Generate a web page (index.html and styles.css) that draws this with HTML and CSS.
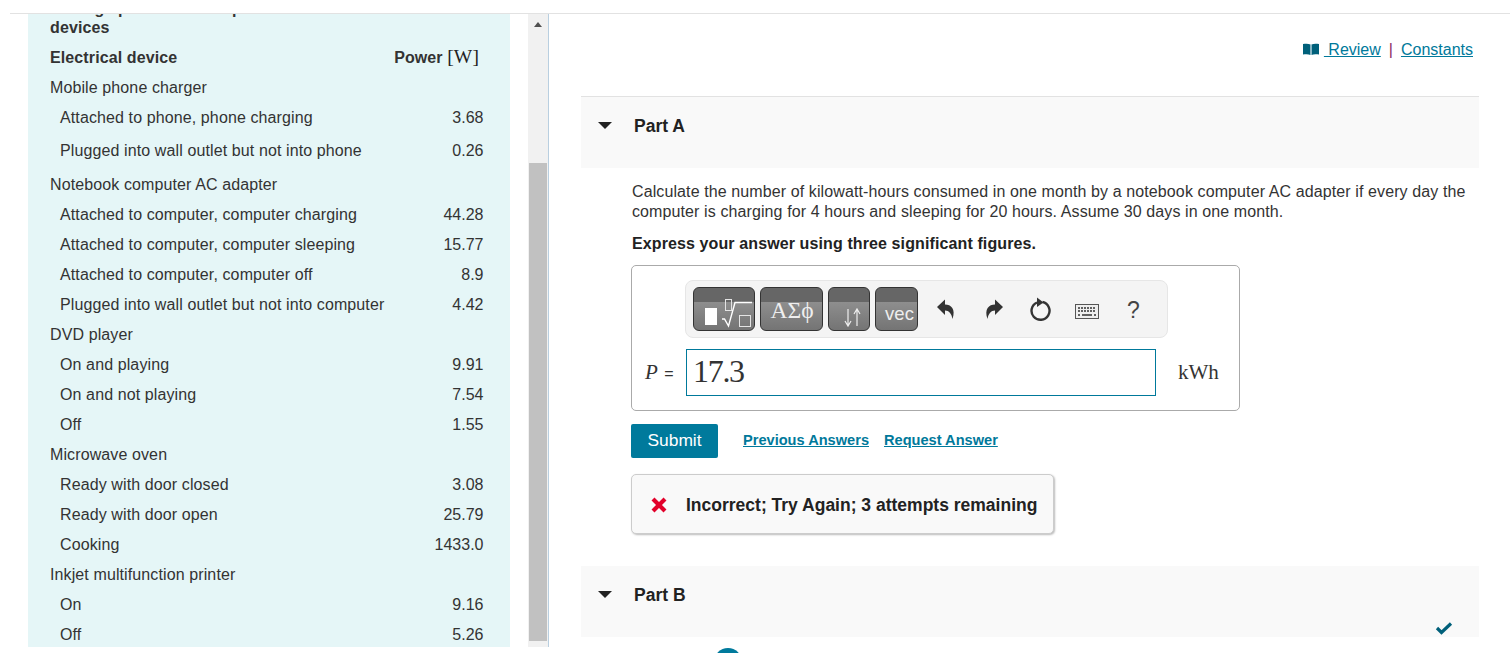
FILE: index.html
```html
<!DOCTYPE html>
<html lang="en">
<head>
<meta charset="utf-8">
<title>Part A</title>
<link rel="stylesheet" href="styles.css">
</head>
<body>
<div class="topbar"></div>
<div class="main">
  <aside class="sidebar">
    <div class="sheet">
      <div class="sheet-title">Average power consumption of electrical<br>devices</div>
      <table class="power">
        <tr class="r-head"><th>Electrical device</th><th class="unit">Power <span class="serif">[W]</span></th></tr>
        <tr><td class="group" colspan="2">Mobile phone charger</td></tr>
        <tr><td class="item">Attached to phone, phone charging</td><td class="num">3.68</td></tr>
        <tr class="r-tall"><td class="item">Plugged into wall outlet but not into phone</td><td class="num">0.26</td></tr>
        <tr class="r-mid"><td class="group" colspan="2">Notebook computer AC adapter</td></tr>
        <tr><td class="item">Attached to computer, computer charging</td><td class="num">44.28</td></tr>
        <tr><td class="item">Attached to computer, computer sleeping</td><td class="num">15.77</td></tr>
        <tr><td class="item">Attached to computer, computer off</td><td class="num">8.9</td></tr>
        <tr><td class="item">Plugged into wall outlet but not into computer</td><td class="num">4.42</td></tr>
        <tr><td class="group" colspan="2">DVD player</td></tr>
        <tr><td class="item">On and playing</td><td class="num">9.91</td></tr>
        <tr><td class="item">On and not playing</td><td class="num">7.54</td></tr>
        <tr><td class="item">Off</td><td class="num">1.55</td></tr>
        <tr><td class="group" colspan="2">Microwave oven</td></tr>
        <tr><td class="item">Ready with door closed</td><td class="num">3.08</td></tr>
        <tr><td class="item">Ready with door open</td><td class="num">25.79</td></tr>
        <tr><td class="item">Cooking</td><td class="num">1433.0</td></tr>
        <tr><td class="group" colspan="2">Inkjet multifunction printer</td></tr>
        <tr><td class="item">On</td><td class="num">9.16</td></tr>
        <tr><td class="item">Off</td><td class="num">5.26</td></tr>
      </table>
    </div>
  </aside>
  <div class="scrollbar">
    <div class="scroll-arrow"></div>
    <div class="scroll-thumb"></div>
  </div>
  <main class="content">
    <div class="toplinks">
      <svg class="book" width="16" height="12" viewBox="0 0 16 12"><path d="M0 1C3 .500 5.500 .500 7.500 1.500V12C5.500 11 3 11 0 11.500z" fill="#00607a"/><path d="M16 1C13 .500 10.500 .500 8.500 1.500V12C10.500 11 13 11 16 11.500z" fill="#00607a"/><path d="M8 1.500V12" stroke="#8fbccb" stroke-width="1"/></svg>
      <a href="#" class="link">&nbsp;Review</a>
      <span class="sep">|</span>
      <a href="#" class="link">Constants</a>
    </div>
    <section class="part part-a">
      <svg class="tri" width="14" height="7" viewBox="0 0 14 7"><path d="M0 0h14L7 7z" fill="#222"/></svg>
      <span class="part-name">Part A</span>
    </section>
    <div class="body">
      <p class="question">Calculate the number of kilowatt-hours consumed in one month by a notebook computer AC adapter if every day the computer is charging for 4 hours and sleeping for 20 hours. Assume 30 days in one month.</p>
      <p class="express">Express your answer using three significant figures.</p>
      <div class="answer">
        <div class="toolbar">
          <div class="tbtn t1">
            <svg width="60" height="42" viewBox="0 0 60 42"><rect x="11" y="20" width="12" height="17" fill="#fff"/><rect x="31.500" y="11.500" width="6" height="11" fill="none" stroke="#e4e4e4"/><path d="M28 31h2.500l4 7L41 14.500h17" fill="none" stroke="#fff" stroke-width="1.400"/><rect x="45.500" y="27.500" width="11" height="11" fill="none" stroke="#e4e4e4"/></svg>
          </div>
          <div class="tbtn t2"><span class="greek">ΑΣϕ</span></div>
          <div class="tbtn t3">
            <svg width="40" height="24" viewBox="0 0 40 24"><path d="M19 3v16M16 15l3 5 3-5M28 20V4M25 8l3-5 3 5" fill="none" stroke="#eee" stroke-width="1.200"/></svg>
          </div>
          <div class="tbtn t4"><span class="vec">vec</span></div>
          <div class="tools">
            <svg class="tool" width="20" height="22" viewBox="0 0 20 22"><path d="M1 9l8-7.500v5C15 6.500 20 11 16.500 21 15.500 15.500 13 12.500 9 12.500v4.500z" fill="#333"/></svg>
            <svg class="tool" width="20" height="22" viewBox="0 0 20 22"><path d="M19 9l-8-7.500v5C5 6.500 0 11 3.500 21 4.500 15.500 7 12.500 11 12.500v4.500z" fill="#333"/></svg>
            <svg class="tool" width="24" height="24" viewBox="0 0 24 24"><path d="M14.500 5a9 9 0 1 1-5.500 .500" fill="none" stroke="#333" stroke-width="2.400"/><path d="M9 .500l6.500 5-6.500 4.500z" fill="#333"/></svg>
            <svg class="tool key" width="26" height="17" viewBox="0 0 26 17"><rect x="1.500" y="1.500" width="23" height="14" fill="#eee" stroke="#555"/><path d="M4 5h18M4 8h18" stroke="#333" stroke-width="1.500" stroke-dasharray="2 1"/><path d="M4 12h2M8 12h10M20 12h2" stroke="#333" stroke-width="1.500"/></svg>
            <span class="help">?</span>
          </div>
        </div>
        <div class="entry">
          <span class="lhs"><i class="var">P</i> =</span>
          <div class="input">17.3</div>
          <span class="units">kWh</span>
        </div>
      </div>
      <div class="actions">
        <button class="submit">Submit</button>
        <a href="#" class="action-link">Previous Answers</a>
        <a href="#" class="action-link">Request Answer</a>
      </div>
      <div class="feedback">
        <svg width="18" height="18" viewBox="0 0 18 18"><path d="M3 3l12 12M15 3L3 15" stroke="#e2002a" stroke-width="4.200"/></svg>
        <span class="feedback-text">Incorrect; Try Again; 3 attempts remaining</span>
      </div>
    </div>
    <section class="part part-b">
      <svg class="tri" width="14" height="7" viewBox="0 0 14 7"><path d="M0 0h14L7 7z" fill="#222"/></svg>
      <span class="part-name">Part B</span>
      <svg class="check" width="18" height="14" viewBox="0 0 18 14"><path d="M2 7l4.500 4.500L16 2.500" fill="none" stroke="#00607a" stroke-width="3.200"/></svg>
    </section>
    <div class="dot"></div>
  </main>
</div>
</body>
</html>
```

FILE: styles.css
```css
* { box-sizing: border-box; }
html, body { margin: 0; height: 653px; overflow: hidden; background: #fff; }
body { font-family: "Liberation Sans", Arial, sans-serif; font-size: 16px; color: #333; }
.topbar { height: 14px; margin-left: 10px; border-bottom: 1px solid #e2e2e2; }
.main { display: flex; height: 639px; }

.sidebar { width: 482px; height: 633px; margin-left: 28px; background: #e5f6f7; overflow: hidden; flex: none; }
.sheet { margin-top: -15px; padding-left: 22px; letter-spacing: 0.11px; }
.sheet-title { font-weight: 700; line-height: 19px; height: 44px; color: #333; }
.power { border-collapse: collapse; width: 434px; }
.power th, .power td { padding: 0; height: 30px; line-height: 20px; font-weight: 400; text-align: left; }
.power th { font-weight: 700; }
.power .unit { text-align: right; padding: 0 5px 2px 0; white-space: nowrap; }
.serif { font-family: "Liberation Serif", serif; font-weight: 400; font-size: 19.500px; line-height: 1; color: #222; }
.power .item { padding-left: 10px; }
.power .num { text-align: right; padding-right: 0.500px; letter-spacing: 0; }
.r-tall td { height: 36px; }
.power .r-mid td { height: 31px; }

.scrollbar { width: 21px; height: 633px; margin-left: 18px; background: #f1f1f1; border-right: 1px solid #b9cfe0; flex: none; padding: 8px 1px 0; display: flex; flex-direction: column; align-items: center; }
.scroll-arrow { width: 0; height: 0; border-left: 4px solid transparent; border-right: 4px solid transparent; border-bottom: 5px solid #505050; margin-bottom: 136px; }
.scroll-thumb { width: 18px; height: 478px; background: #c1c1c1; flex: none; }

.content { width: 898px; margin-left: 32px; flex: none; }
.toplinks { height: 82px; padding: 26px 6px 0 0; display: flex; justify-content: flex-end; align-items: flex-start; line-height: 20px; color: #8c2a63; }
.link { color: #00799b; text-decoration: underline; text-decoration-thickness: 1px; }
.book { margin: 3px 5px 0 0; }
.sep { margin: 0 8px; }

.part { position: relative; height: 71px; background: #f9f9f9; display: flex; align-items: flex-start; padding: 19px 0 0 17px; }
.part-a { border-top: 1px solid #e2e2e2; height: 72px; }
.tri { margin-top: 6px; }
.part-name { font-weight: 700; font-size: 17.500px; line-height: 20px; margin-left: 22px; color: #222; }
.check { position: absolute; right: 26px; bottom: 2px; }

.body { padding: 14px 0 0 50px; }
.question { margin: 0; padding-left: 1px; line-height: 20px; width: 850px; letter-spacing: 0.105px; }
.express { margin: 12px 0 0; padding-left: 1px; font-weight: 700; line-height: 20px; letter-spacing: 0.11px; color: #222; }
.answer { width: 609px; height: 146px; margin-top: 11px; border: 1px solid #aaa; border-radius: 5px; padding: 14px 0 0 53px; }
.toolbar { width: 483px; height: 58px; background: #f4f4f4; border: 1px solid #e6e6e6; border-radius: 8px; display: flex; padding: 6px 0 0 7px; gap: 5px; }
.tbtn { height: 44px; border: 1px solid #333; border-radius: 6px; background: linear-gradient(#666 0 14px, #8e8e8e 14px, #747474 100%); color: #eee; display: flex; align-items: flex-end; justify-content: center; overflow: hidden; }
.t1 { width: 62px; }
.t2 { width: 63px; }
.t3 { width: 42px; }
.t4 { width: 43px; }
.tbtn svg { display: block; flex: none; }
.greek { font-family: "Liberation Serif", serif; font-size: 23.500px; line-height: 25px; margin: 0 0 7px 1px; }
.vec { font-size: 18.500px; line-height: 24px; margin: 0 0 4px 6px; }
.tools { display: flex; align-items: center; height: 44px; margin-left: 13px; }
.tool { flex: none; }
.tools .tool:nth-child(2) { margin-left: 28px; }
.tools .tool:nth-child(3) { margin-left: 24px; }
.tools .key { margin-left: 22px; margin-top: 4px; }
.help { font-size: 23px; line-height: 28px; padding-top: 1px; color: #444; margin-left: 27px; }
.entry { display: flex; align-items: center; margin-top: 11px; height: 47px; margin-left: -39px; }
.lhs { width: 40px; font-size: 16px; white-space: nowrap; margin-left: -1px; flex: none; }
.var { font-family: "Liberation Serif", serif; font-size: 21px; margin-right: 2px; }
.input { width: 470px; height: 47px; border: 1px solid #00799b; margin-left: 1px; font-family: "Liberation Serif", serif; font-size: 32px; line-height: 43px; padding-left: 6px; letter-spacing: -1.300px; flex: none; }
.units { font-family: "Liberation Serif", serif; font-size: 21px; margin-left: 22px; }

.actions { display: flex; align-items: center; margin-top: 13px; height: 34px; }
.submit { width: 87px; height: 34px; border: 0; border-radius: 2px; background: #007a9c; color: #fff; font: 17.400px "Liberation Sans", Arial, sans-serif; padding: 0 0 2px; }
.action-link { color: #00799b; font-weight: 700; font-size: 14.600px; text-decoration: underline; margin: 0 0 2px 25px; }
.action-link + .action-link { margin-left: 15px; }
.feedback { width: 423px; height: 60px; margin: 16px 0 32px; background: #f9f9f9; border: 1px solid #ccc; border-radius: 5px; box-shadow: 1px 1px 2px #bbb; display: flex; align-items: center; padding: 2px 0 0 18px; }
.feedback-text { font-weight: 700; font-size: 17.500px; color: #222; margin-left: 18px; }
.dot { width: 28px; height: 28px; margin: 11px 0 0 133px; border-radius: 50%; background: #007a9c; }
```
